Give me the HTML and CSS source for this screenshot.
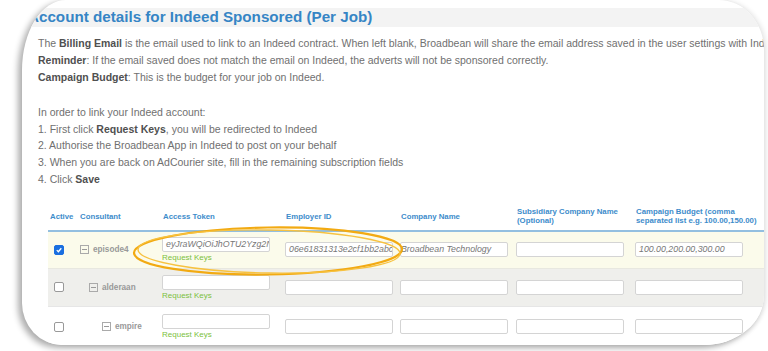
FILE: index.html
```html
<!DOCTYPE html>
<html>
<head>
<meta charset="utf-8">
<link rel="stylesheet" href="styles.css">
</head>
<body>
<div class="page">
  <div class="card">
    <div class="band"><h1 class="title">Account details for Indeed Sponsored (Per Job)</h1></div>
    <div class="intro">
      <p class="line">The <b>Billing Email</b> is the email used to link to an Indeed contract. When left blank, Broadbean will share the email address saved in the user settings with Indeed.</p>
      <p class="line"><b>Reminder</b>: If the email saved does not match the email on Indeed, the adverts will not be sponsored correctly.</p>
      <p class="line"><b>Campaign Budget</b>: This is the budget for your job on Indeed.</p>
      <p class="line gap">In order to link your Indeed account:</p>
      <p class="line">1. First click <b>Request Keys</b>, you will be redirected to Indeed</p>
      <p class="line">2. Authorise the Broadbean App in Indeed to post on your behalf</p>
      <p class="line">3. When you are back on AdCourier site, fill in the remaining subscription fields</p>
      <p class="line">4. Click <b>Save</b></p>
    </div>
    <div class="table">
      <div class="row head">
        <div class="hcell">Active</div>
        <div class="hcell">Consultant</div>
        <div class="hcell">Access Token</div>
        <div class="hcell">Employer ID</div>
        <div class="hcell">Company Name</div>
        <div class="hcell">Subsidiary Company Name<br>(Optional)</div>
        <div class="hcell">Campaign Budget (comma<br>separated list e.g. 100.00,150.00)</div>
      </div>
      <div class="row r1">
        <div class="cell"><span class="cb checked"><svg viewBox="0 0 10 10" width="10" height="10"><path d="M2.2 5.2 L4.2 7.2 L7.9 2.8" fill="none" stroke="#fff" stroke-width="1.6"/></svg></span></div>
        <div class="cell cons l0"><span class="tog"></span><span class="name">episode4</span></div>
        <div class="cell stack"><div class="inp">eyJraWQiOiJhOTU2Yzg2NzQ</div><div class="rk">Request Keys</div></div>
        <div class="cell"><div class="inp">06e61831313e2cf1bb2abc</div></div>
        <div class="cell"><div class="inp shift">Broadbean Technology</div></div>
        <div class="cell"><div class="inp"></div></div>
        <div class="cell"><div class="inp">100.00,200.00,300.00</div></div>
      </div>
      <div class="row r2">
        <div class="cell"><span class="cb"></span></div>
        <div class="cell cons l1"><span class="tog"></span><span class="name">alderaan</span></div>
        <div class="cell stack"><div class="inp"></div><div class="rk">Request Keys</div></div>
        <div class="cell"><div class="inp"></div></div>
        <div class="cell"><div class="inp"></div></div>
        <div class="cell"><div class="inp"></div></div>
        <div class="cell"><div class="inp"></div></div>
      </div>
      <div class="row r3">
        <div class="cell"><span class="cb"></span></div>
        <div class="cell cons l2"><span class="tog"></span><span class="name">empire</span></div>
        <div class="cell stack"><div class="inp"></div><div class="rk">Request Keys</div></div>
        <div class="cell"><div class="inp"></div></div>
        <div class="cell"><div class="inp"></div></div>
        <div class="cell"><div class="inp"></div></div>
        <div class="cell"><div class="inp"></div></div>
      </div>
    </div>
    <svg class="ring" viewBox="0 0 300 60" width="300" height="60">
      <ellipse cx="140" cy="28" rx="134" ry="23.5" fill="none" stroke="#f2aa12" stroke-width="2.2" transform="rotate(-0.8 140 28)"/>
      <ellipse cx="141" cy="28.5" rx="131" ry="21.5" fill="none" stroke="#f7c240" stroke-width="1.4" transform="rotate(0.9 140 28)"/>
    </svg>
  </div>
</div>
</body>
</html>
```
FILE: styles.css
```css
html, body {
  margin: 0;
  padding: 0;
  background: #ffffff;
  width: 768px;
  height: 351px;
  overflow: hidden;
}
.page {
  padding-left: 22px;
  font-family: "Liberation Sans", Arial, sans-serif;
}
.card {
  position: relative;
  width: 742px;
  height: 345px;
  background: #fff;
  overflow: hidden;
  border-radius: 44px 45px 60px 40px / 70px 50px 50px 42px;
  box-shadow: -4px 3px 6px rgba(0,0,0,0.32), 3px 0 4px rgba(0,0,0,0.08);
}
.band {
  margin-top: 8px;
  height: 19px;
  background: #f3f3f3;
  padding-left: 6px;
}
.title {
  margin: 0;
  font-size: 15.2px;
  line-height: 19px;
  font-weight: bold;
  color: #3685c5;
  white-space: nowrap;
  position: relative;
  top: -1px;
}
.intro {
  padding: 8px 0 0 16px;
}
.line {
  margin: 0;
  font-size: 10.5px;
  line-height: 16.8px;
  color: #707070;
  white-space: nowrap;
}
.line b { color: #505050; }
.gap { margin-top: 18.5px; }
.table {
  margin: 16px 0 0 26px;
}
.row {
  display: grid;
  grid-template-columns: 30px 83px 123px 115px 116px 119px 128px;
  align-items: center;
}
.head {
  height: 26px;
  border-bottom: 2px solid #93bfe0;
}
.hcell {
  font-size: 7.8px;
  line-height: 8.4px;
  font-weight: bold;
  color: #3d8ccb;
  white-space: nowrap;
  padding-left: 2px;
}
.r1 { height: 36px; background: #fbfbeb; border-bottom: 1px solid #e8e8e0; }
.r2 { height: 37px; background: #efefec; border-bottom: 1px solid #e6e6e6; }
.r3 { height: 40px; background: #fff; }
.cell {
  display: flex;
  align-items: center;
}
.cell.stack {
  flex-direction: column;
  align-items: flex-start;
}
.cb {
  margin-left: 6px;
  width: 8px;
  height: 8px;
  border: 1px solid #999;
  border-radius: 2px;
  background: #fff;
  display: flex;
  align-items: center;
  justify-content: center;
}
.cb.checked {
  background: #1a6fe0;
  border-color: #1a6fe0;
}
.cb svg { display: block; }
.cons { gap: 4px; }
.l0 { padding-left: 2px; }
.l1 { padding-left: 11px; }
.l2 { padding-left: 24px; }
.tog {
  width: 7px;
  height: 7px;
  border: 1px solid #aaa;
  position: relative;
}
.tog::after {
  content: "";
  position: absolute;
  left: 1px;
  right: 1px;
  top: 3px;
  height: 1px;
  background: #999;
}
.name {
  font-size: 8.2px;
  font-weight: bold;
  color: #999;
}
.inp {
  box-sizing: border-box;
  width: 108px;
  height: 15px;
  border: 1px solid #d4d4d4;
  border-radius: 2px;
  background: #fff;
  font-size: 8.8px;
  line-height: 13px;
  font-style: italic;
  color: #777;
  padding-left: 3px;
  overflow: hidden;
  white-space: nowrap;
  margin-left: 1px;
}
.inp.shift { text-indent: -3px; }
.rk {
  font-size: 8px;
  line-height: 9px;
  color: #7cbf3d;
  margin-left: 1px;
  margin-top: 1px;
}
.ring {
  position: absolute;
  left: 106px;
  top: 223px;
}
```
